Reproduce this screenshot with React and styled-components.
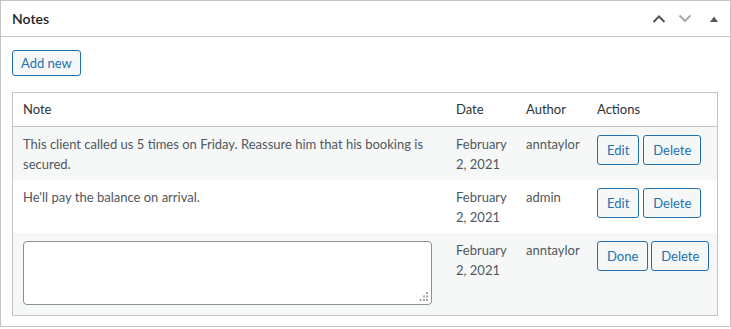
import React from "react";
import styled, { createGlobalStyle } from "styled-components";

const GlobalStyle = createGlobalStyle`
  html, body { margin: 0; padding: 0; background: #ffffff; }
  body { font-family: Lato, "Noto Sans", sans-serif; font-size: 13px; color: #50575e; }
  * { box-sizing: border-box; }
`;

const Panel = styled.section`
  width: 731px;
  border: 1px solid #c3c4c7;
  background: #ffffff;
`;

const PanelHeader = styled.header`
  display: flex;
  align-items: center;
  height: 36px;
  border-bottom: 1px solid #c3c4c7;
  padding-left: 11px;
`;

const Title = styled.h2`
  flex: 1;
  margin: 0;
  font-size: 14px;
  font-weight: 600;
  color: #1d2327;
  line-height: 1.4;
  padding-top: 1px;
`;

const HandleGroup = styled.div`
  display: flex;
  align-items: center;
  height: 100%;
`;

const HandleButton = styled.button`
  display: flex;
  align-items: center;
  justify-content: center;
  width: ${(p) => p.$w}px;
  height: 100%;
  padding: 0;
  border: 0;
  background: transparent;
  color: ${(p) => p.$color};
  cursor: pointer;
`;

const Inside = styled.div`
  padding: 13px 12px 10px 11px;
`;

const Button = styled.button`
  display: inline-block;
  font-family: Lato, "Noto Sans", sans-serif;
  font-size: 13px;
  height: ${(p) => (p.$small ? 26 : 30)}px;
  line-height: ${(p) => (p.$small ? 24 : 28)}px;
  padding: 0 ${(p) => (p.$small ? 8 : 9)}px;
  color: #2271b1;
  background: #f6f7f7;
  border: 1px solid #2271b1;
  border-radius: 3px;
  white-space: nowrap;
  cursor: pointer;
`;

const Table = styled.table`
  margin-top: 16px;
  width: 100%;
  table-layout: fixed;
  border-collapse: separate;
  border-spacing: 0;
  border: 1px solid #c3c4c7;
  background: #ffffff;
`;

const Th = styled.th`
  text-align: left;
  font-weight: 400;
  font-size: 13px;
  line-height: 17px;
  color: #2c3338;
  padding: 8px 10px;
  border-bottom: 1px solid #c3c4c7;
`;

const Tr = styled.tr`
  background: ${(p) => (p.$alt ? "#f6f7f7" : "#ffffff")};
`;

const Td = styled.td`
  vertical-align: top;
  padding: 8px 10px 6px;
  font-size: 13px;
  line-height: 19.5px;
  color: #50575e;
  overflow: visible;
`;

const Actions = styled.div`
  display: flex;
  gap: ${(p) => p.$gap}px;
  white-space: nowrap;
`;

const InputWrap = styled.div`
  position: relative;
  width: 99%;
  height: 64px;
  margin-bottom: 4px;
`;

const NoteInput = styled.textarea`
  display: block;
  width: 100%;
  height: 100%;
  margin: 0;
  padding: 2px 6px;
  border: 1px solid #8c8f94;
  border-radius: 4px;
  background: #ffffff;
  font-family: Lato, "Noto Sans", sans-serif;
  font-size: 13px;
  color: #2c3338;
  resize: none;
`;

const Grip = styled.svg`
  position: absolute;
  right: 3px;
  bottom: 3px;
  pointer-events: none;
`;

const Chevron = ({ up }) => (
  <svg width="14" height="9" viewBox="0 0 14 9" aria-hidden="true">
    <polyline
      points={up ? "1.5,8 7,2.5 12.5,8" : "1.5,1.5 7,7 12.5,1.5"}
      fill="none"
      stroke="currentColor"
      strokeWidth="2"
    />
  </svg>
);

const Triangle = () => (
  <svg width="8" height="6" viewBox="0 0 8 6" aria-hidden="true">
    <polygon points="0,6 4,0.5 8,6" fill="currentColor" />
  </svg>
);

const GripDots = () => (
  <Grip width="10" height="10" viewBox="0 0 10 10" aria-hidden="true">
    <g fill="#a7aaad">
      <rect x="7" y="0" width="2" height="2" />
      <rect x="4" y="3.5" width="2" height="2" />
      <rect x="7" y="3.5" width="2" height="2" />
      <rect x="0.5" y="7" width="2" height="2" />
      <rect x="4" y="7" width="2" height="2" />
      <rect x="7" y="7" width="2" height="2" />
    </g>
  </Grip>
);

const notes = [
  { text: "This client called us 5 times on Friday. Reassure him that his booking is secured.", date: "February 2, 2021", author: "anntaylor", editing: false },
  { text: "He'll pay the balance on arrival.", date: "February 2, 2021", author: "admin", editing: false },
  { text: "", date: "February 2, 2021", author: "anntaylor", editing: true },
];

export default function App() {
  return (
    <>
      <GlobalStyle />
      <Panel>
        <PanelHeader>
          <Title>Notes</Title>
          <HandleGroup>
            <HandleButton $w={26} $color="#50575e" aria-label="Move up"><Chevron up /></HandleButton>
            <HandleButton $w={26} $color="#a7aaad" aria-label="Move down"><Chevron /></HandleButton>
            <HandleButton $w={32} $color="#50575e" aria-label="Toggle panel"><Triangle /></HandleButton>
          </HandleGroup>
        </PanelHeader>
        <Inside>
          <Button $small>Add new</Button>
          <Table>
            <colgroup>
              <col />
              <col style={{ width: 70 }} />
              <col style={{ width: 71 }} />
              <col style={{ width: 130 }} />
            </colgroup>
            <thead>
              <tr>
                <Th>Note</Th>
                <Th>Date</Th>
                <Th>Author</Th>
                <Th>Actions</Th>
              </tr>
            </thead>
            <tbody>
              {notes.map((n, i) => (
                <Tr key={i} $alt={i % 2 === 0}>
                  <Td>
                    {n.editing ? (
                      <InputWrap>
                        <NoteInput defaultValue={n.text} />
                        <GripDots />
                      </InputWrap>
                    ) : (
                      n.text
                    )}
                  </Td>
                  <Td>{n.date}</Td>
                  <Td>{n.author}</Td>
                  <Td>
                    <Actions $gap={n.editing ? 3 : 4}>
                      <Button>{n.editing ? "Done" : "Edit"}</Button>
                      <Button>Delete</Button>
                    </Actions>
                  </Td>
                </Tr>
              ))}
            </tbody>
          </Table>
        </Inside>
      </Panel>
    </>
  );
}
